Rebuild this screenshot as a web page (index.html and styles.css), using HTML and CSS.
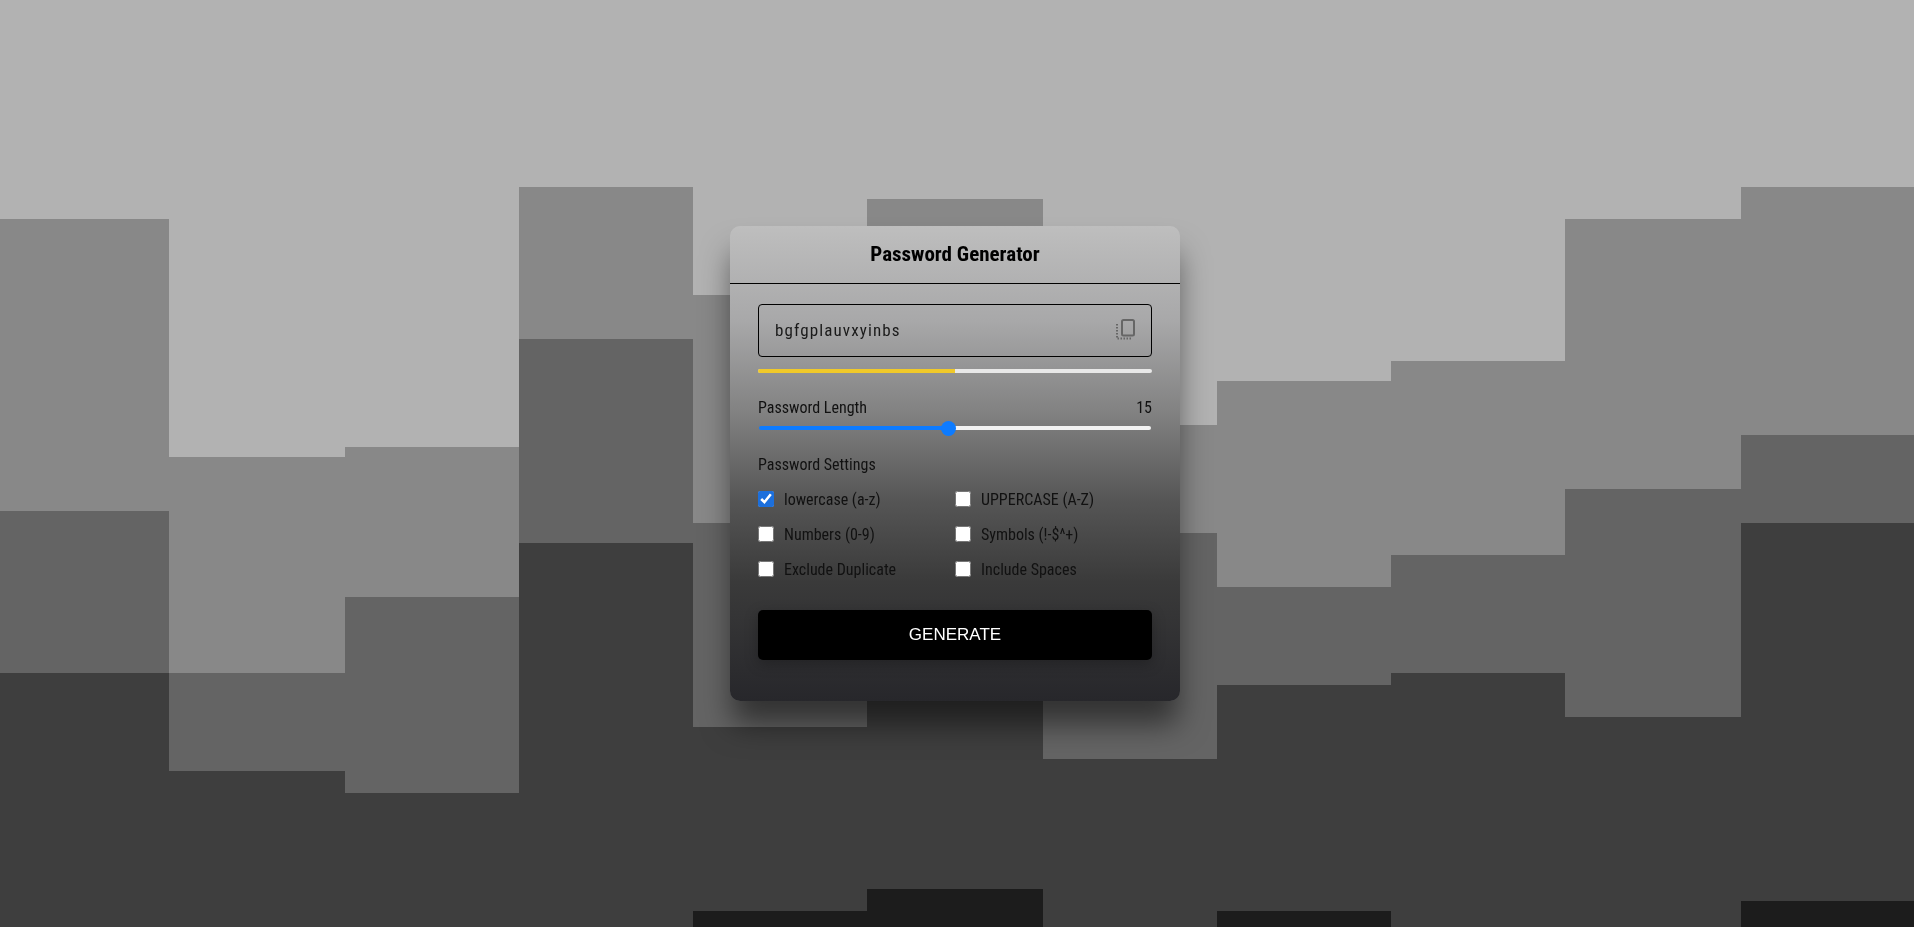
FILE: index.html
```html
<!DOCTYPE html>
<html lang="en">
<head>
<meta charset="utf-8">
<title>Password Generator</title>
<link rel="stylesheet" href="styles.css">
</head>
<body>
<svg class="backdrop" viewBox="0 0 1914 927" preserveAspectRatio="none" aria-hidden="true">
  <path fill="#888888" d="M0 927V219H169V457H345V447H519V187H693V295H867V199H1043V425H1217V381H1391V361H1565V219H1741V187H1914V927Z"/>
  <path fill="#646464" d="M0 927V511H169V673H345V597H519V339H693V523H867V400H1043V533H1217V587H1391V555H1565V489H1741V435H1914V927Z"/>
  <path fill="#3e3e3e" d="M0 927V673H169V771H345V793H519V543H693V727H867V650H1043V759H1217V685H1391V673H1565V717H1741V523H1914V927Z"/>
  <path fill="#1c1c1c" d="M693 927V911H867V889H1043V927ZM1217 927V911H1391V927ZM1741 927V901H1914V927Z"/>
</svg>
<main class="page">
  <section class="card">
    <h1 class="card-title">Password Generator</h1>
    <div class="card-body">
      <div class="password-box">
        <span class="password-text">bgfgplauvxyinbs</span>
        <svg class="copy-icon" viewBox="0 0 22 22" aria-hidden="true">
          <rect class="copy-front" x="7" y="1" width="12" height="15.5" rx="1.5"/>
          <path class="copy-back" d="M2 5V19.5H16"/>
        </svg>
      </div>
      <div class="strength"><div class="strength-fill"></div></div>
      <div class="length-row"><span>Password Length</span><span>15</span></div>
      <input class="slider" type="range" min="1" max="30" value="15">
      <div class="settings-title">Password Settings</div>
      <div class="options">
        <label class="option"><input type="checkbox" checked><span>lowercase (a-z)</span></label>
        <label class="option"><input type="checkbox"><span>UPPERCASE (A-Z)</span></label>
        <label class="option"><input type="checkbox"><span>Numbers (0-9)</span></label>
        <label class="option"><input type="checkbox"><span>Symbols (!-$^+)</span></label>
        <label class="option"><input type="checkbox"><span>Exclude Duplicate</span></label>
        <label class="option"><input type="checkbox"><span>Include Spaces</span></label>
      </div>
      <button class="generate" type="button">GENERATE</button>
    </div>
  </section>
</main>
</body>
</html>
```

FILE: styles.css
```css
* { box-sizing: border-box; }
html, body { margin: 0; height: 100%; overflow: hidden; }
body {
  background: #b2b2b2;
  color: #111;
  font-family: "Roboto Condensed", "Liberation Sans Narrow", Roboto, sans-serif;
  font-stretch: 75%;
  font-size: 16px;
}
.backdrop { position: fixed; inset: 0; width: 100%; height: 100%; display: block; }
.page {
  position: relative;
  min-height: 100vh;
  padding-right: 4px;
  display: flex;
  align-items: center;
  justify-content: center;
}
.card {
  width: 450px;
  height: 475px;
  border-radius: 10px;
  background: linear-gradient(180deg, #bebebe 0%, #a8a8a9 20%, #808080 40%, #555 58%, #3a3a3a 75%, #27272b 100%);
  box-shadow: 0 25px 30px -2px rgba(0, 0, 0, 0.5);
}
.card-title {
  margin: 0;
  height: 58px;
  line-height: 57px;
  text-align: center;
  font-size: 21px;
  font-weight: 700;
  color: #000;
  border-bottom: 1px solid #000;
}
.card-body { padding: 20px 28px 0; }
.password-box {
  height: 53px;
  padding: 0 14px 2px 16px;
  border: 1px solid #000;
  border-radius: 4px;
  display: flex;
  align-items: center;
  justify-content: space-between;
}
.password-text { letter-spacing: 1.1px; font-size: 17px; color: #1a1a1a; }
.copy-icon { width: 22px; height: 22px; display: block; }
.copy-front { fill: none; stroke: #666; stroke-width: 2; }
.copy-back { fill: none; stroke: #666; stroke-width: 2; stroke-dasharray: 1.5 1.5; }
.strength { margin-top: 12px; height: 4px; border-radius: 2px; background: #e8e8e8; overflow: hidden; }
.strength-fill { width: 50%; height: 100%; background: #f0c929; }
.length-row { margin-top: 25px; display: flex; justify-content: space-between; line-height: 19px; }
.slider {
  display: block;
  width: 100%;
  height: 16px;
  margin: 3px 0 1px;
  appearance: none;
  -webkit-appearance: none;
  background: transparent;
}
.slider::-webkit-slider-runnable-track {
  height: 4px;
  border-radius: 2px;
  margin: 0 1px;
  background: linear-gradient(90deg, #0d7bff 48%, #f2f2f2 48%);
}
.slider::-webkit-slider-thumb {
  -webkit-appearance: none;
  width: 15px;
  height: 15px;
  margin-top: -5.5px;
  border-radius: 50%;
  background: #0d7bff;
}
.settings-title { margin-top: 19px; line-height: 19px; }
.options { margin-top: 7.5px; display: grid; grid-template-columns: 197px 197px; grid-auto-rows: 35px; }
.option { display: flex; align-items: center; gap: 10px; height: 35px; color: #111; }
.option input { margin: 0; width: 16px; height: 16px; flex: none; accent-color: #1c6fdc; }
.generate {
  display: block;
  width: 100%;
  height: 50px;
  margin-top: 23.5px;
  border: 0;
  border-radius: 5px;
  background: #000;
  color: #fff;
  font-family: "Liberation Sans", Arial, sans-serif;
  font-stretch: normal;
  font-size: 17px;
  box-shadow: 0 4px 14px rgba(0, 0, 0, 0.25);
}
```
